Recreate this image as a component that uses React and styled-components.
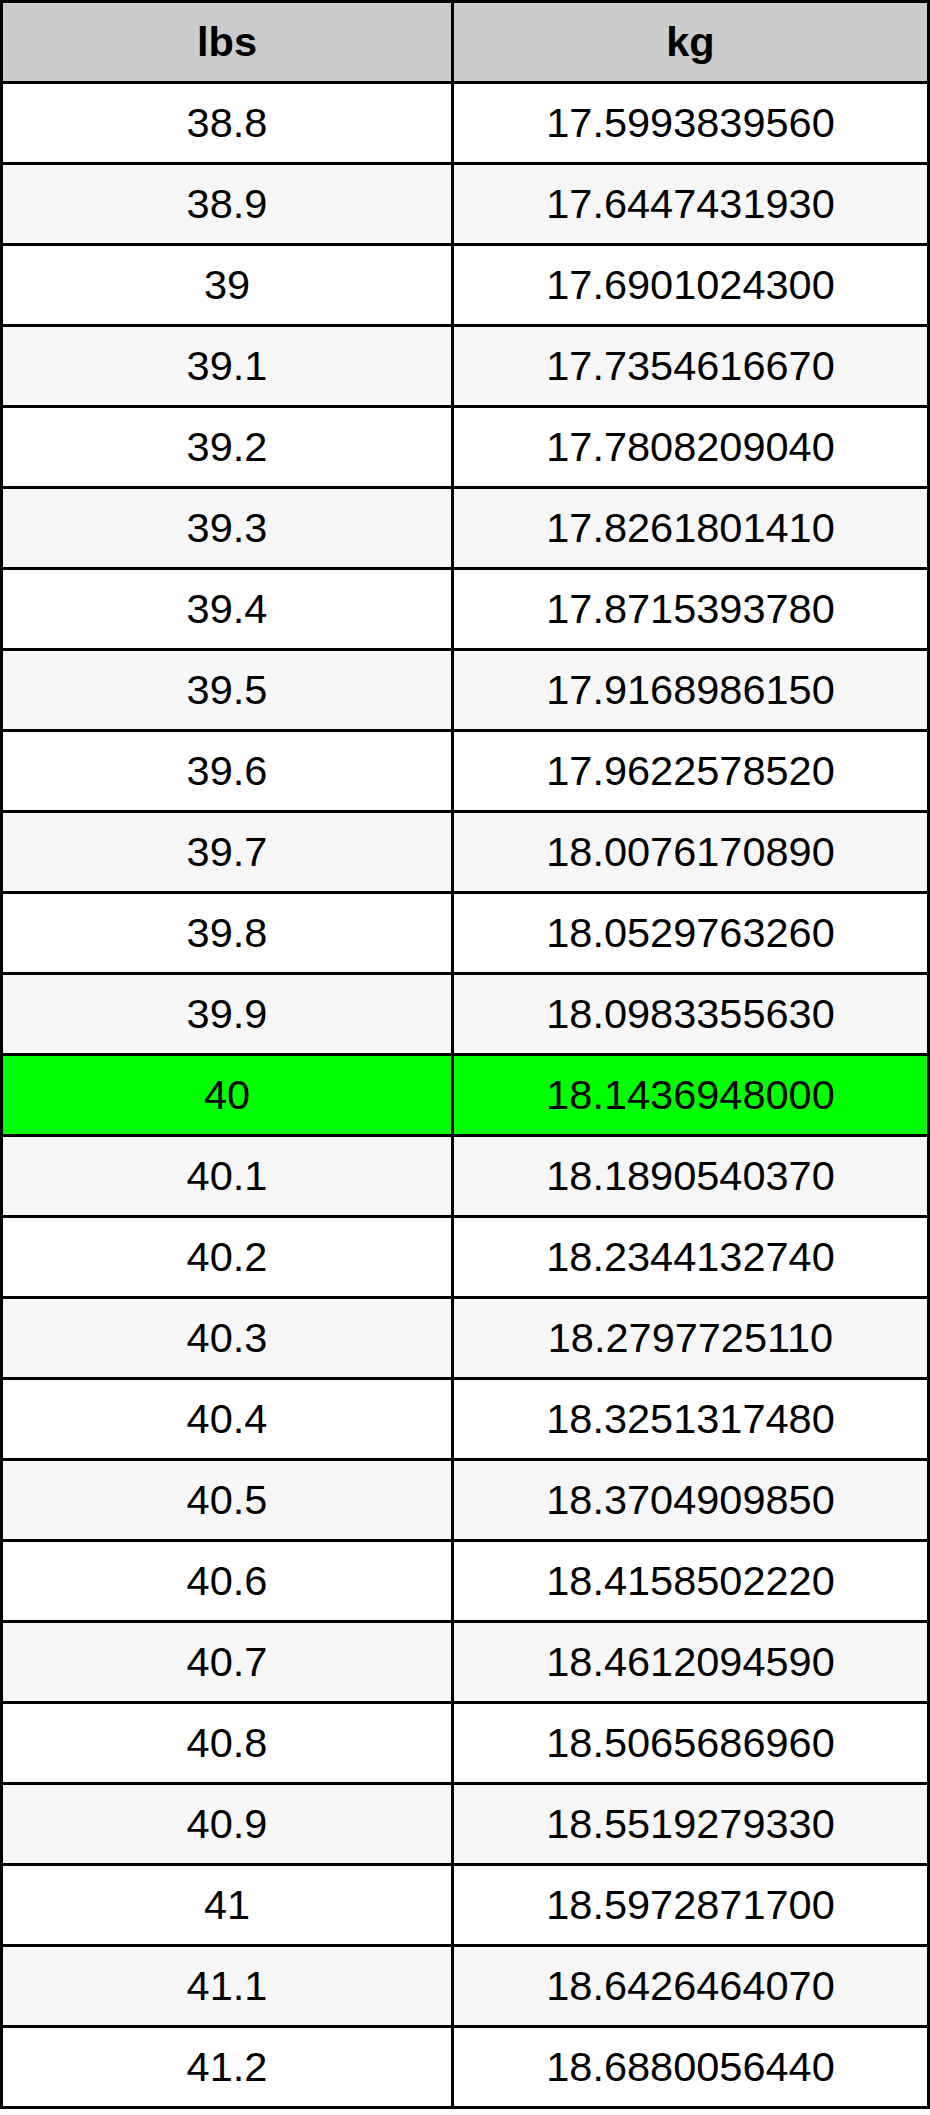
import React from "react";
import styled, { createGlobalStyle } from "styled-components";

const GlobalStyle = createGlobalStyle`
  html, body {
    margin: 0;
    padding: 0;
    background: #ffffff;
  }
  body {
    font-family: "Liberation Sans", Arial, sans-serif;
  }
`;

// tenths of a pound, 38.8 .. 41.2
const rows = [];
for (let t = 388; t <= 412; t++) {
  const n = String(t * 45359237);
  rows.push({
    key: t,
    lbs: t % 10 === 0 ? String(t / 10) : (t / 10).toFixed(1),
    kg: n.slice(0, -9) + "." + n.slice(-9) + "0",
    highlight: t === 400,
  });
}

const App = () => {
  return (
    <Wrapper>
      <GlobalStyle />
      <Table>
        <HeadCell>lbs</HeadCell>
        <HeadCell>kg</HeadCell>
        {rows.map((row, i) => (
          <React.Fragment key={row.key}>
            <Cell $striped={i % 2 === 1} $highlight={row.highlight}>
              {row.lbs}
            </Cell>
            <Cell $striped={i % 2 === 1} $highlight={row.highlight}>
              {row.kg}
            </Cell>
          </React.Fragment>
        ))}
      </Table>
    </Wrapper>
  );
};

const Wrapper = styled.div`
  width: 930px;
`;

const Table = styled.div`
  display: grid;
  grid-template-columns: 451px 476px;
  grid-auto-rows: 81px;
  border-top: 3px solid #000;
  border-left: 3px solid #000;
`;

const HeadCell = styled.div`
  display: flex;
  align-items: center;
  justify-content: center;
  background-color: #cccccc;
  border-right: 3px solid #000;
  border-bottom: 3px solid #000;
  font-size: 41.5px;
  font-weight: bold;
  color: #000;
`;

const Cell = styled.div`
  display: flex;
  align-items: center;
  justify-content: center;
  background-color: ${(p) =>
    p.$highlight ? "#00ff00" : p.$striped ? "#f7f7f7" : "#ffffff"};
  border-right: 3px solid #000;
  border-bottom: 3px solid #000;
  font-size: 41.5px;
  color: #000;
`;

export default App;
